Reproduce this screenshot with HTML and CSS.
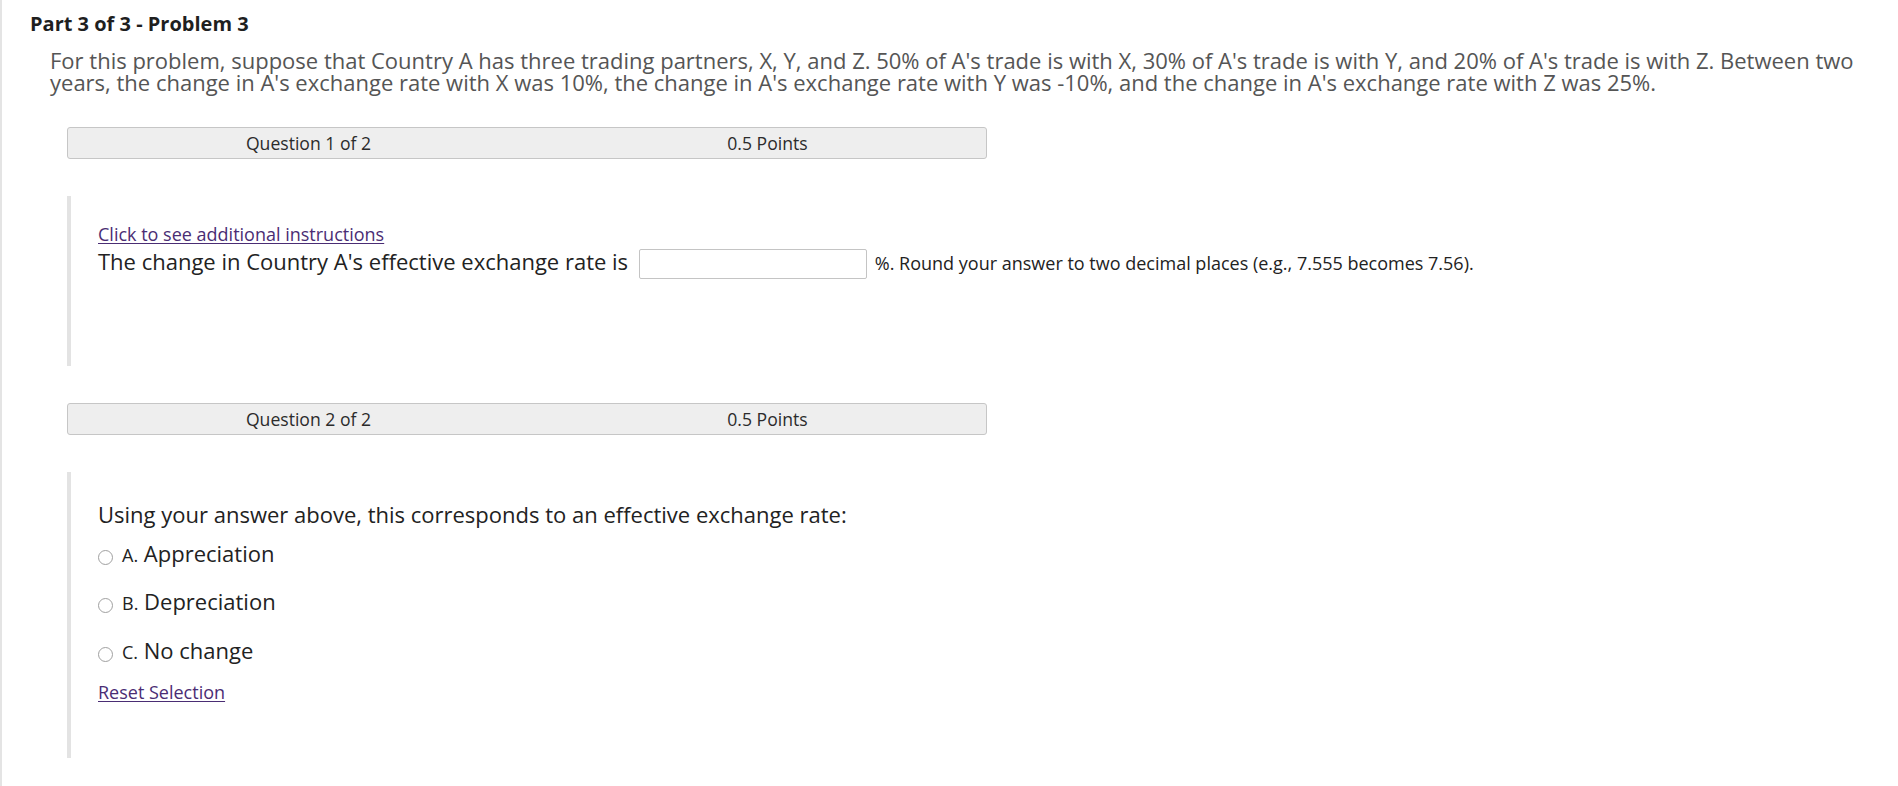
FILE: index.html
```html
<!DOCTYPE html>
<html lang="en">
<head>
<meta charset="utf-8">
<title>Part 3 of 3 - Problem 3</title>
<link rel="stylesheet" href="styles.css">
</head>
<body>
<div class="page">
  <h1 class="part-title">Part 3 of 3 - Problem 3</h1>
  <p class="intro">For this problem, suppose that Country A has three trading partners, X, Y, and Z. 50% of A's trade is with X, 30% of A's trade is with Y, and 20% of A's trade is with Z. Between two years, the change in A's exchange rate with X was 10%, the change in A's exchange rate with Y was -10%, and the change in A's exchange rate with Z was 25%.</p>

  <div class="qbar">
    <div class="qbar-cell">Question 1 of 2</div>
    <div class="qbar-cell">0.5 Points</div>
  </div>

  <div class="qblock qblock-one">
    <div><a class="link" href="#">Click to see additional instructions</a></div>
    <div class="qline">The change in Country A's effective exchange rate is <input class="answer" type="text"><span class="hint">%. Round your answer to two decimal places (e.g., 7.555 becomes 7.56).</span></div>
  </div>

  <div class="qbar">
    <div class="qbar-cell">Question 2 of 2</div>
    <div class="qbar-cell">0.5 Points</div>
  </div>

  <div class="qblock qblock-two">
    <div class="qline">Using your answer above, this corresponds to an effective exchange rate:</div>
    <div class="options">
      <div class="option"><span class="radio"></span><span class="letter">A.</span> Appreciation</div>
      <div class="option"><span class="radio"></span><span class="letter">B.</span> Depreciation</div>
      <div class="option"><span class="radio"></span><span class="letter">C.</span> No change</div>
    </div>
    <div class="reset"><a class="link" href="#">Reset Selection</a></div>
  </div>
</div>
</body>
</html>
```

FILE: styles.css
```css
html, body {
  margin: 0;
  padding: 0;
  background: #ffffff;
}

body {
  font-family: "Open Sans", "Liberation Sans", sans-serif;
  color: #222222;
}

.page {
  min-height: 786px;
  box-sizing: border-box;
  border-left: 2px solid #e4e4e4;
  padding: 12px 0 0 28px;
}

.part-title {
  margin: 0;
  font-size: 20px;
  line-height: 24px;
  font-weight: 700;
  color: #1f1f1f;
}

.intro {
  margin: 13px 16px 0 20px;
  font-size: 22px;
  line-height: 22px;
  color: #555555;
}

.qbar {
  margin: 34px 0 0 37px;
  width: 920px;
  height: 32px;
  box-sizing: border-box;
  display: grid;
  grid-template-columns: 1fr 1fr;
  align-items: center;
  background: #eeeeee;
  border: 1px solid #c6c6c6;
  border-radius: 3px;
  font-size: 17.6px;
  color: #2b2b2b;
}

.qbar-cell {
  text-align: center;
  padding-left: 22px;
}

.qblock {
  margin: 37px 0 0 37px;
  border-left: 4px solid #e3e3e3;
  padding-left: 27px;
  box-sizing: border-box;
}

.qblock-one {
  height: 170px;
  padding-top: 26px;
}

.qblock-two {
  height: 286px;
  padding-top: 27px;
}

.qblock + .qbar {
  margin-top: 37px;
}

.link {
  font-size: 18px;
  line-height: 24px;
  color: #4a2d74;
  text-decoration: underline;
  text-underline-offset: 2px;
}

.qline {
  font-size: 22px;
  line-height: 30px;
  color: #222222;
}

.answer {
  width: 228px;
  height: 30px;
  box-sizing: border-box;
  margin: 0 8px 0 5px;
  border: 1px solid #c4c4c4;
  border-radius: 2px;
  vertical-align: middle;
  padding: 0 6px;
  font: inherit;
}

.hint {
  font-size: 18px;
  color: #222222;
}

.options {
  margin-top: 9px;
  display: flex;
  flex-direction: column;
  gap: 18.4px;
}

.option {
  font-size: 22px;
  line-height: 30px;
  height: 30px;
  color: #222222;
}

.radio {
  display: inline-block;
  width: 15px;
  height: 15px;
  box-sizing: border-box;
  border: 1.5px solid #a0a0a0;
  border-radius: 50%;
  vertical-align: -3px;
  margin-right: 9px;
}

.letter {
  font-size: 18px;
  line-height: 1;
}

.reset {
  margin-top: 15.5px;
  line-height: 24px;
}
```
